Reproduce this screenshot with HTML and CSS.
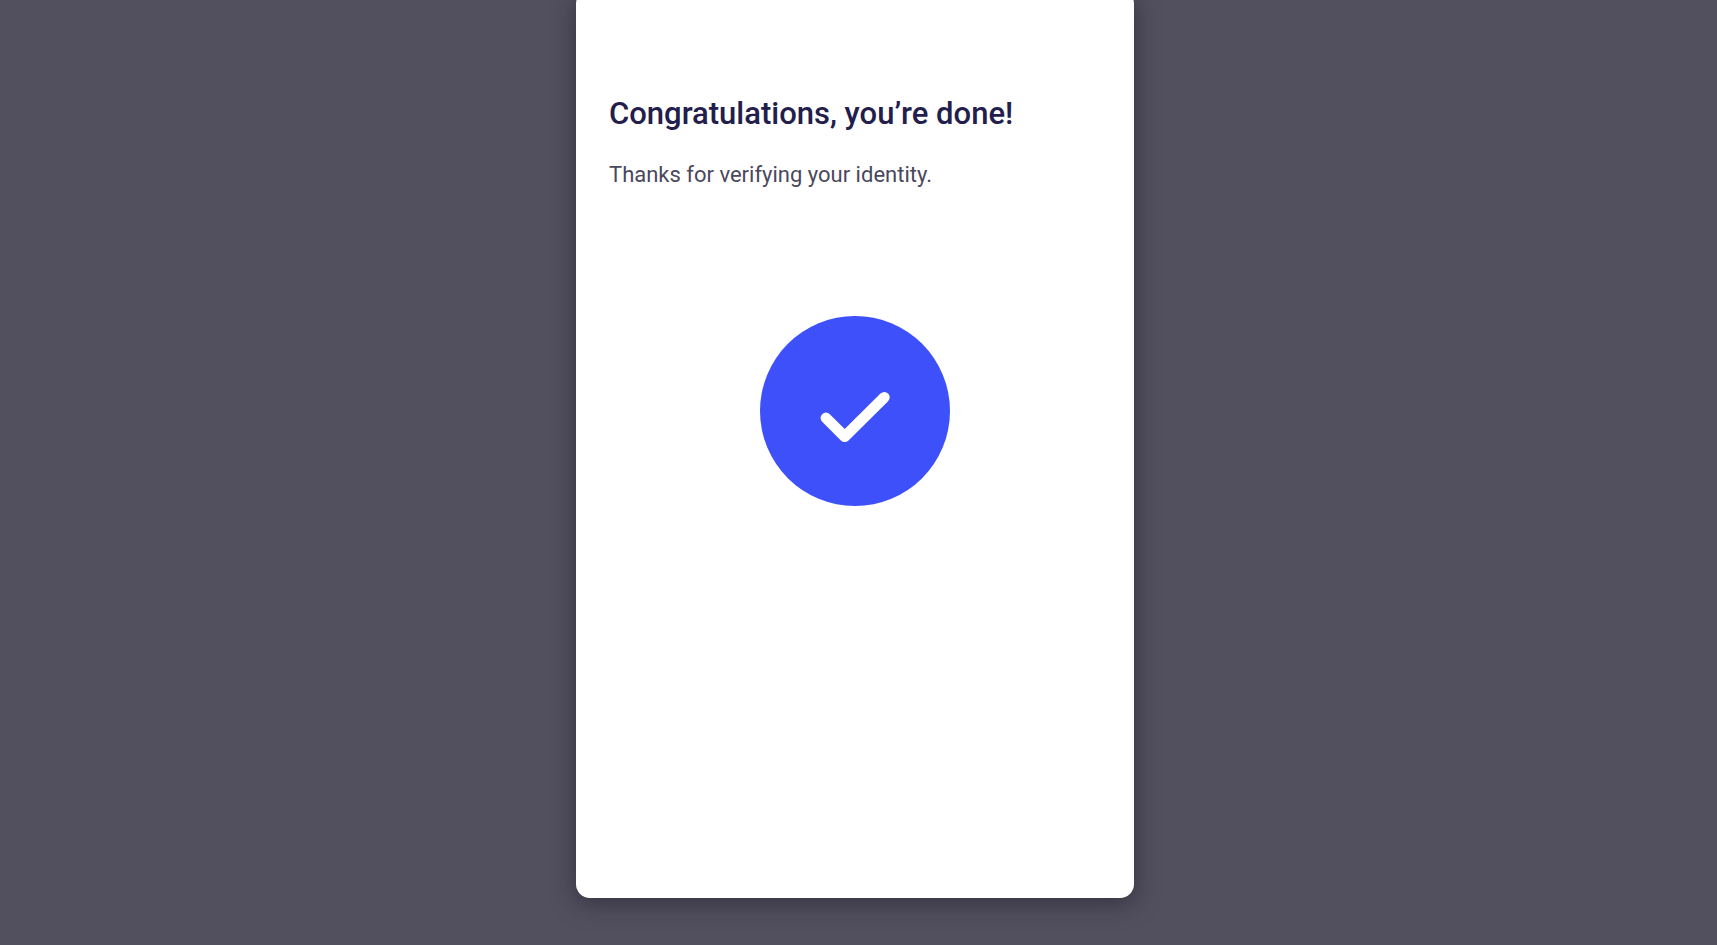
FILE: index.html
```html
<!DOCTYPE html>
<html lang="en">
<head>
<meta charset="utf-8">
<meta name="viewport" content="width=device-width, initial-scale=1">
<title>Identity verified</title>
<link rel="stylesheet" href="styles.css">
</head>
<body>
<main class="card">
  <h1 class="title">Congratulations, you’re done!</h1>
  <p class="message">Thanks for verifying your identity.</p>
  <svg class="badge" viewBox="0 0 190 190" role="img" aria-label="Verified">
    <circle cx="95" cy="95" r="95" fill="#3e50fa"/>
    <path d="M66 102 84.7 120.6 124.3 81.3" fill="none" stroke="#fff" stroke-width="10.8" stroke-linecap="round" stroke-linejoin="round"/>
  </svg>
</main>
</body>
</html>
```
FILE: styles.css
```css
* {
  box-sizing: border-box;
}

html,
body {
  height: 100%;
  margin: 0;
}

body {
  display: flex;
  justify-content: center;
  padding-right: 7px;
  overflow: hidden;
  background: #52505f;
  font-family: Roboto, "Liberation Sans", sans-serif;
}

.card {
  display: flex;
  flex-direction: column;
  width: 100%;
  max-width: 558px;
  margin: -10px 0 47px;
  padding: 104px 33px 32px;
  border-radius: 14px;
  background: #fff;
  box-shadow: 0 5px 24px rgba(20, 20, 30, 0.5);
}

.title {
  margin: 0;
  color: #231e4b;
  font-size: 31px;
  font-weight: 500;
  line-height: 40px;
}

.message {
  margin: 25px 0 0;
  color: #4b475c;
  font-size: 22px;
  line-height: 32px;
}

.badge {
  width: 190px;
  height: 190px;
  margin-top: 125px;
  align-self: center;
}
```
